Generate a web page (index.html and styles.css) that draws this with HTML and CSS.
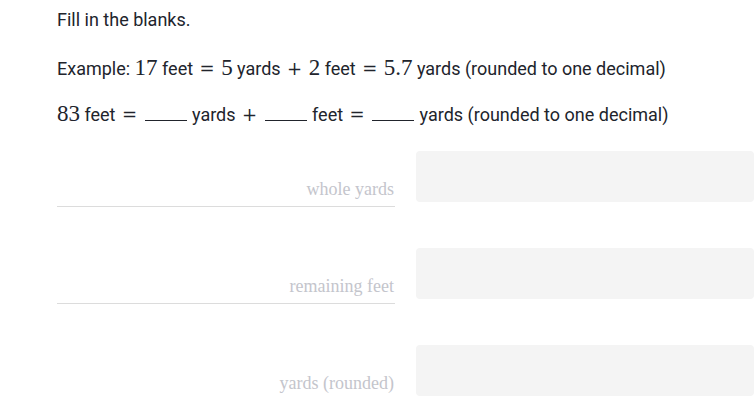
FILE: index.html
```html
<!DOCTYPE html>
<html>
<head>
	<meta charset="utf-8">
	<title>Fill in the blanks</title>
	<link rel="stylesheet" href="styles.css">
</head>
<body>
	<div class="page">
		<p class="line">Fill in the blanks.</p>
		<p class="line">Example: <span class="math">17</span> feet <span class="op">=</span> <span class="math">5</span> yards <span class="op">+</span> <span class="math">2</span> feet <span class="op">=</span> <span class="math">5.7</span> yards (rounded to one decimal)</p>
		<p class="line task"><span class="math">83</span> feet <span class="op">=</span> <span class="blank"></span> yards <span class="op">+</span> <span class="blank"></span> feet <span class="op">=</span> <span class="blank"></span> yards (rounded to one decimal)</p>
		<div class="rows">
			<div class="row">
				<div class="field"><span class="label">whole yards</span></div>
				<div class="box"></div>
			</div>
			<div class="row">
				<div class="field"><span class="label">remaining feet</span></div>
				<div class="box"></div>
			</div>
			<div class="row">
				<div class="field"><span class="label">yards (rounded)</span></div>
				<div class="box"></div>
			</div>
		</div>
	</div>
</body>
</html>
```

FILE: styles.css
```css
body{
	margin: 0;
	background-color: #fff;
	font-family: Roboto, "Liberation Sans", sans-serif;
	color: #21242c;
}
.page{
	padding: 0 0 0 57px;
}
.line{
	margin: 0;
	font-size: 18px;
	line-height: 22px;
	padding-top: 9px;
	height: 39px;
}
.line.task{
	padding-top: 7px;
	height: 41px;
}
.math{
	font-family: "Liberation Serif", serif;
	font-size: 23px;
	line-height: 22px;
}
.op{
	font-family: "DejaVu Serif", serif;
	font-size: 18px;
	line-height: 22px;
	margin: 0 2px;
}
.blank{
	display: inline-block;
	width: 42px;
	height: 1px;
	margin: 0 1px;
	background-color: #21242c;
	vertical-align: 0;
}
.rows{
	margin-top: 7px;
}
.row{
	display: flex;
	gap: 21px;
	height: 56px;
	margin-bottom: 41px;
}
.field{
	width: 338px;
	height: 55px;
	border-bottom: 1px solid #dcdcdc;
	display: flex;
	align-items: flex-end;
	justify-content: flex-end;
}
.label{
	font-family: "Liberation Serif", serif;
	font-size: 18px;
	line-height: 20px;
	padding: 0 1px 7px 0;
	color: #c4c5cc;
}
.box{
	width: 338px;
	height: 51px;
	border-radius: 4px;
	background-color: #f4f4f4;
}
```
